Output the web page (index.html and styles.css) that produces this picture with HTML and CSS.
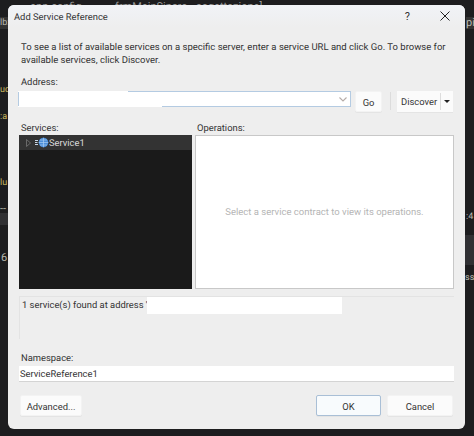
FILE: index.html
```html
<!DOCTYPE html>
<html lang="en">
<head>
<meta charset="utf-8">
<title>Add Service Reference</title>
<link rel="stylesheet" href="styles.css">
</head>
<body>
<div class="ide">
  <span class="band band-l"></span><span class="band band-r"></span>
  <span class="tab-a">app.config</span><span class="tab-b">frmMainSincro - sogettazione]</span>
  <span class="bit b1">lb:</span><span class="bit b2">ud</span><span class="bit b3">:a</span><span class="bit b4">lu</span><span class="bit b5">--</span><span class="bit b8">6</span>
  <span class="bit b6">pi</span><span class="bit b9">:4</span><span class="bit b7">ss</span>
</div>
<main class="dialog">
  <header class="titlebar">
    <span class="title">Add Service Reference</span>
    <span class="help">?</span>
    <svg class="close" viewBox="0 0 10 10" width="10" height="10"><path d="M.5.5l9 9M9.5.5l-9 9" fill="none" stroke="#222" stroke-width="1"/></svg>
  </header>
  <p class="intro">To see a list of available services on a specific server, enter a service URL and click Go. To browse for<br>available services, click Discover.</p>
  <label class="label addr-label">Address:</label>
  <div class="addr-row">
    <div class="combo">
      <span class="mask mask-top"></span><span class="mask mask-bottom"></span>
      <svg class="chev" viewBox="0 0 8 5" width="8" height="5"><path d="M.5.5L4 4 7.500.5" fill="none" stroke="#b5aca8" stroke-width="1.100"/></svg>
    </div>
    <button class="btn go">Go</button>
    <span class="sep"></span>
    <div class="split"><span class="split-main">Discover</span><span class="split-arrow"><i class="tri"></i></span></div>
  </div>
  <div class="panes">
    <section class="pane left">
      <div class="label">Services:</div>
      <div class="tree">
        <div class="tree-row">
          <svg class="exp" viewBox="0 0 5 8" width="5" height="8"><path d="M.5.5L4.500 4 .5 7.500z" fill="none" stroke="#777" stroke-width=".8"/></svg>
          <svg class="svc" viewBox="0 0 14 11" width="14" height="11">
            <path d="M0 3.500h3M0 5.500h2.500M0 7.500h3" stroke="#c9d6e6" stroke-width="1"/>
            <circle cx="8.500" cy="5.500" r="4.800" fill="#4c8ed8"/>
            <path d="M3.700 5.500h9.600M8.500.7v9.600M5 3h7M5 8h7" stroke="#a9cdf2" stroke-width=".7"/>
          </svg>
          <span class="svc-name">Service1</span>
        </div>
      </div>
    </section>
    <section class="pane right">
      <div class="label">Operations:</div>
      <div class="ops">Select a service contract to view its operations.</div>
    </section>
  </div>
  <div class="status"><span class="status-text">1 service(s) found at address '</span><span class="redact"></span></div>
  <label class="label ns-label">Namespace:</label>
  <div class="ns">ServiceReference1</div>
  <footer class="actions">
    <button class="btn adv">Advanced...</button>
    <span class="spacer"></span>
    <button class="btn ok">OK</button>
    <button class="btn cancel">Cancel</button>
  </footer>
</main>
</body>
</html>
```
FILE: styles.css
```css
* { box-sizing: border-box; }
html, body { margin: 0; padding: 0; }
body { width: 474px; height: 436px; overflow: hidden; position: relative; background: #1d1d1f; font-family: Roboto, "Open Sans", sans-serif; font-size: 9.400px; color: #333; text-rendering: geometricPrecision; }
.ide { position: absolute; inset: 0; color: #b8b8b0; font-size: 11px; }
.tab-a, .tab-b { position: absolute; top: 0; height: 5px; overflow: hidden; line-height: 13px; color: #9a9a9a; }
.tab-a { left: 30px; }
.tab-b { left: 115px; }
.band { position: absolute; background: #303033; }
.band-l { left: 0; top: 213px; width: 8px; height: 12px; }
.band-r { left: 465px; top: 235px; width: 9px; height: 30px; }
.bit { position: absolute; line-height: 12px; }
.b1 { left: 0; top: 17px; background: #333; padding-right: 2px; font-size: 9px; }
.b2 { left: 0; top: 84px; color: #c9b860; font-size: 9px; }
.b3 { left: 0; top: 111px; color: #c9b860; font-size: 9px; }
.b4 { left: 0; top: 177px; color: #c9b860; font-size: 9px; }
.b5 { left: 0; top: 203px; }
.b8 { left: 1px; top: 252px; }
.b6 { left: 466px; top: 17px; background: #333; padding-right: 4px; }
.b9 { left: 466px; top: 211px; font-size: 9px; }
.b7 { left: 465px; top: 272px; font-size: 9px; }
.dialog { position: absolute; left: 8px; top: 5px; width: 457px; height: 424px; background: #eeeeee; border-radius: 6px; padding: 0 11px; display: flex; flex-direction: column; }
.titlebar { display: flex; align-items: center; height: 22px; margin: 0 -11px; padding: 0 0 0 6px; background: linear-gradient(#f1f3f7, #eeeeee); border-radius: 6px 6px 0 0; flex: none; }
.title { flex: 1; padding-top: 2px; }
.help { font-size: 11px; margin-right: 30px; }
.close { margin-right: 15px; }
.intro { margin: 14px 0 0 2px; line-height: 13px; font-size: 9.500px; white-space: nowrap; }
.label { padding-top: 3px; line-height: 11px; display: block; margin-left: 2px; }
.addr-label { margin-top: 7px; }
.addr-row { display: flex; align-items: stretch; height: 21px; margin: 3px 0 0 -1px; flex: none; }
.combo { position: relative; width: 333px; height: 16px; align-self: flex-start; background: #fff; border: 1px solid #b4cbe2; display: flex; align-items: center; justify-content: flex-end; padding-right: 3px; }
.mask { position: absolute; background: #fff; height: 1px; }
.mask-top { left: -1px; top: -1px; width: 110px; }
.mask-bottom { left: -1px; bottom: -1px; width: 144px; }
.btn { font: inherit; color: #333; background: #fbfbfb; border: 1px solid #f3f3f3; border-radius: 2px; padding: 2px 0 0; box-shadow: 0 1px 0 #e4e4e4; }
.go { width: 27px; margin-left: 4px; }
.sep { width: 1px; background: #dcdcdc; margin: 1px 6px 2px 8px; }
.split { width: 56px; display: flex; background: #fbfbfb; align-items: center; box-shadow: 0 1px 0 #e4e4e4; }
.split-main { flex: 1; padding: 2px 0 0 4px; border-right: 1px solid #ddd; line-height: 15px; }
.split-arrow { width: 12px; display: flex; justify-content: center; }
.tri { width: 0; height: 0; border: 3px solid transparent; border-top-color: #222; border-bottom: 0; }
.panes { display: flex; gap: 3px; margin-top: 8px; height: 169px; flex: none; }
.pane { display: flex; flex-direction: column; }
.left { width: 173px; }
.right { width: 259px; }
.tree { flex: 1; background: #1a1a1a; margin-top: 1px; }
.tree-row { height: 15px; background: #333333; display: flex; align-items: center; color: #dcdcdc; padding-left: 7px; }
.exp { margin-right: 4px; }
.svc-name { padding-top: 2px; }
.ops { flex: 1; background: #fff; border: 1px solid #c8c8c8; margin-top: 1px; display: flex; align-items: center; justify-content: center; color: #b5b5b5; font-size: 9.500px; }
.status { height: 43px; margin-top: 7px; border: 1px solid #e3e3e3; border-bottom: 0; border-right: 0; padding-left: 2px; display: flex; align-items: flex-start; line-height: 17px; flex: none; }
.status-text { width: 125px; white-space: nowrap; }
.redact { width: 195px; height: 17px; background: #fff; }
.ns-label { margin-top: 11px; }
.ns { height: 16px; margin-top: 2px; background: #fff; border-bottom: 1px solid #d4d4d4; padding: 2px 0 0 1px; line-height: 13px; flex: none; }
.actions { display: flex; margin-top: 13px; height: 21px; padding: 0 1px; flex: none; }
.adv { width: 62px; }
.spacer { flex: 1; }
.ok { width: 65px; background: #f8fbfd; border: 1px solid #a9bfd6; }
.cancel { width: 66px; margin-left: 6px; }
```
